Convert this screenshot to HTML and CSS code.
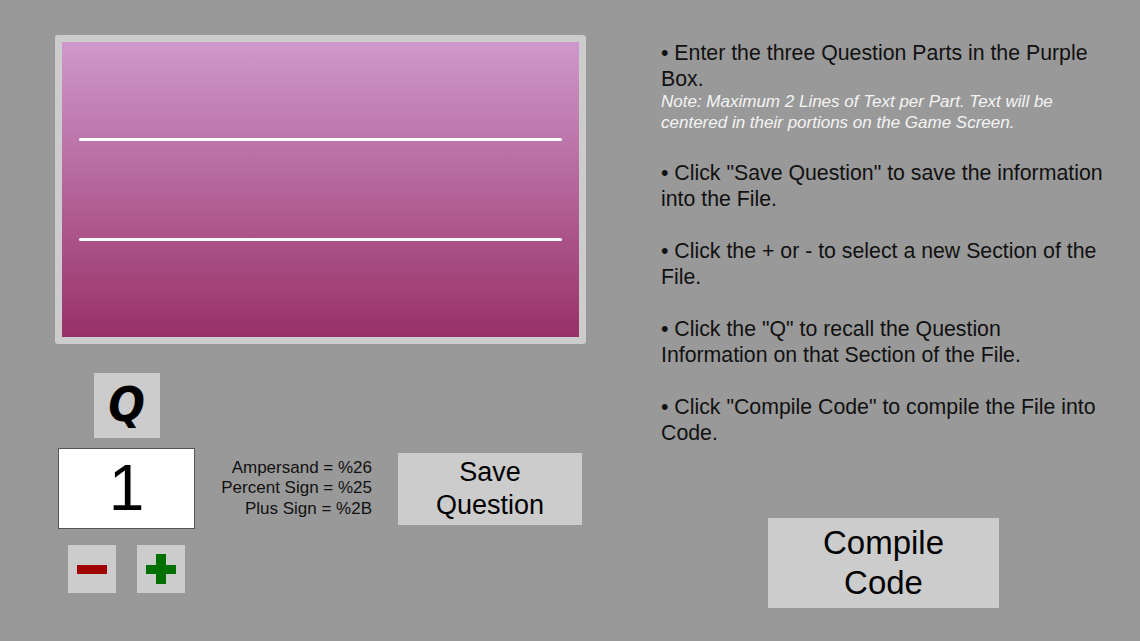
FILE: index.html
```html
<!DOCTYPE html>
<html>
<head>
<meta charset="utf-8">
<link rel="stylesheet" href="styles.css">
</head>
<body>
<div class="page">
  <div class="left">
    <div class="purple">
      <div class="part"></div>
      <div class="divider"></div>
      <div class="part"></div>
      <div class="divider"></div>
      <div class="part"></div>
    </div>
    <div class="controls">
      <div class="qcol">
        <div class="qbtn">Q</div>
        <div class="numbox">1</div>
        <div class="pm">
          <div class="sqbtn"><span class="minus"></span></div>
          <div class="sqbtn"><span class="plus"></span></div>
        </div>
      </div>
      <div class="legend">
        <div>Ampersand = %26</div>
        <div>Percent Sign = %25</div>
        <div>Plus Sign = %2B</div>
      </div>
      <div class="savebtn">Save<br>Question</div>
    </div>
  </div>
  <div class="right">
    <div class="para">• Enter the three Question Parts in the Purple Box.</div>
    <div class="note">Note: Maximum 2 Lines of Text per Part. Text will be centered in their portions on the Game Screen.</div>
    <div class="para">• Click "Save Question" to save the information into the File.</div>
    <div class="para">• Click the + or - to select a new Section of the File.</div>
    <div class="para">• Click the "Q" to recall the Question Information on that Section of the File.</div>
    <div class="para">• Click "Compile Code" to compile the File into Code.</div>
    <div class="compile">Compile<br>Code</div>
  </div>
</div>
</body>
</html>
```
FILE: styles.css
```css
html, body {
  margin: 0;
  padding: 0;
  background: #999999;
  font-family: "Liberation Sans", Arial, sans-serif;
  color: #000;
}
.page {
  width: 1140px;
  height: 641px;
  display: flex;
  overflow: hidden;
}
.left {
  padding-left: 55px;
  padding-top: 35px;
  width: 531px;
}
.purple {
  width: 483px;
  height: 295px;
  border: 7px solid #cccccc;
  border-radius: 3px;
  background: linear-gradient(#cf98cc, #983168);
  display: flex;
  flex-direction: column;
  padding: 0 17px;
}
.part {
  flex: 1;
}
.divider {
  height: 3px;
  background: #ffffff;
  border-radius: 2px;
}
.controls {
  display: flex;
  margin-left: 3px;
  margin-top: 29px;
}
.qcol {
  width: 137px;
  display: flex;
  flex-direction: column;
  align-items: center;
}
.qbtn {
  width: 66px;
  height: 65px;
  background: #cccccc;
  font-family: "DejaVu Sans Condensed", "Liberation Sans", sans-serif;
  font-weight: 700;
  font-style: italic;
  font-size: 48px;
  line-height: 62px;
  text-align: center;
}
.numbox {
  margin-top: 10px;
  width: 135px;
  height: 79px;
  background: #ffffff;
  border: 1px solid #555555;
  font-size: 64px;
  line-height: 79px;
  text-align: center;
}
.pm {
  margin-top: 16px;
  display: flex;
  gap: 21px;
}
.sqbtn {
  width: 48px;
  height: 48px;
  background: #cccccc;
  display: flex;
  align-items: center;
  justify-content: center;
}
.minus {
  display: block;
  width: 30px;
  height: 9px;
  background: #a00000;
}
.plus {
  display: block;
  width: 30px;
  height: 30px;
  background:
    linear-gradient(#007000, #007000) center / 30px 9px no-repeat,
    linear-gradient(#007000, #007000) center / 10px 30px no-repeat;
}
.legend {
  width: 177px;
  margin-top: 75px;
  height: 81px;
  display: flex;
  flex-direction: column;
  justify-content: center;
  text-align: right;
  font-size: 17px;
  line-height: 20.5px;
  color: #111;
}
.savebtn {
  margin-left: 26px;
  margin-top: 80px;
  width: 184px;
  height: 72px;
  background: #cccccc;
  display: flex;
  align-items: center;
  justify-content: center;
  text-align: center;
  font-size: 27px;
  line-height: 33px;
}
.right {
  margin-left: 75px;
  padding-top: 40px;
  width: 445px;
}
.para {
  font-size: 21.3px;
  line-height: 26px;
  margin-bottom: 26px;
  color: #111;
}
.right .para:first-child {
  margin-bottom: 0;
}
.note {
  font-size: 17px;
  line-height: 20.5px;
  font-style: italic;
  color: #f4f4f4;
  margin-bottom: 27px;
}
.compile {
  margin-left: 107px;
  margin-top: 72px;
  width: 231px;
  height: 90px;
  background: #cccccc;
  display: flex;
  align-items: center;
  justify-content: center;
  text-align: center;
  font-size: 33px;
  line-height: 40px;
}
```
